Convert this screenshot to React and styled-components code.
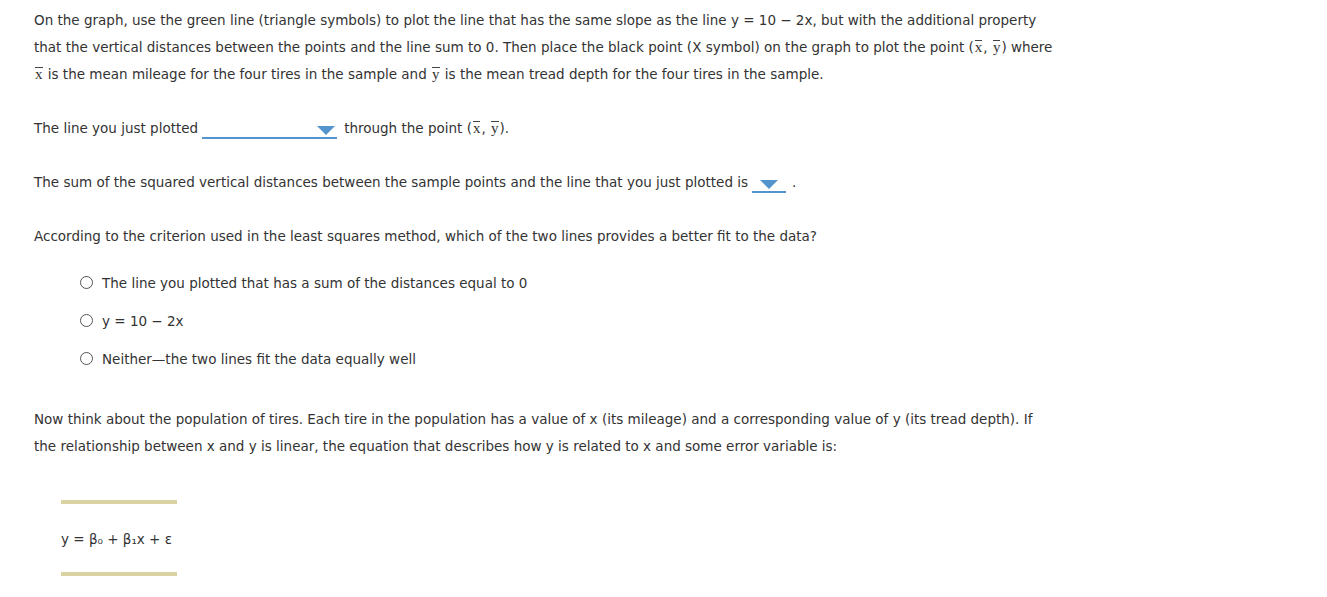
import styled, { createGlobalStyle } from "styled-components";

const GlobalStyle = createGlobalStyle`
    body {
        margin: 0;
        background: #fff;
        font-family: "DejaVu Sans", Verdana, sans-serif;
        font-size: 13.5px;
        color: #333;
    }
`;

const Page = styled.div`
    padding: 6.5px 0 0 34px;
`;

const Para = styled.p`
    margin: 0 0 ${props => (props.gap === undefined ? 27 : props.gap)}px;
    line-height: 27px;
    white-space: nowrap;
`;

// x̄ / ȳ: serif letter with a bar over it
const Bar = styled.span`
    display: inline-block;
    font-family: "Liberation Serif", "DejaVu Serif", serif;
    font-size: 15px;
    line-height: 9px;
    border-top: 1px solid #444;
    padding-top: 2px;
    margin: 0 1px;
`;

const Select = styled.span`
    display: inline-flex;
    justify-content: flex-end;
    align-items: flex-start;
    width: ${props => props.width}px;
    height: 13px;
    margin: 0 ${props => props.right || 7}px 0 4px;
    vertical-align: -2px;
    border-bottom: 2px solid #5494cc;
    padding-right: ${props => props.pad || 2}px;
    box-sizing: border-box;
`;

const Caret = styled.span`
    width: 0;
    height: 0;
    border-left: 9px solid transparent;
    border-right: 9px solid transparent;
    border-top: 9px solid #5494cc;
`;

const Options = styled.div`
    padding: 23px 0 0 46px;
    display: flex;
    flex-direction: column;
    gap: 18px;
    margin-bottom: 37px;
`;

const Option = styled.label`
    display: flex;
    align-items: center;
    gap: 9px;
    line-height: 20px;
`;

const Radio = styled.span`
    width: 11px;
    height: 11px;
    border: 1px solid #555;
    border-radius: 50%;
    flex: none;
`;

const Formula = styled.div`
    margin: 40px 0 0 27px;
    width: 116px;
    border-top: 4px solid #dbd2a3;
    border-bottom: 4px solid #dbd2a3;
    padding: 25px 0 23px;
    line-height: 20px;
`;

export default function App() {
    return (
        <Page>
            <GlobalStyle />
            <Para>
                On the graph, use the green line (triangle symbols) to plot the line that has the same
                slope as the line y = 10 &minus; 2x, but with the additional property
                <br />
                that the vertical distances between the points and the line sum to 0. Then place the
                black point (X symbol) on the graph to plot the point (<Bar>x</Bar>, <Bar>y</Bar>) where
                <br />
                <Bar>x</Bar> is the mean mileage for the four tires in the sample and <Bar>y</Bar> is the
                mean tread depth for the four tires in the sample.
            </Para>
            <Para>
                The line you just plotted
                <Select width={135}>
                    <Caret />
                </Select>
                through the point (<Bar>x</Bar>, <Bar>y</Bar>).
            </Para>
            <Para>
                The sum of the squared vertical distances between the sample points and the line that
                you just plotted is
                <Select width={34} pad={8} right={6}>
                    <Caret />
                </Select>
                .
            </Para>
            <Para gap={0}>
                According to the criterion used in the least squares method, which of the two lines
                provides a better fit to the data?
            </Para>
            <Options>
                <Option>
                    <Radio />
                    The line you plotted that has a sum of the distances equal to 0
                </Option>
                <Option>
                    <Radio />y = 10 &minus; 2x
                </Option>
                <Option>
                    <Radio />
                    Neither&mdash;the two lines fit the data equally well
                </Option>
            </Options>
            <Para gap={0}>
                Now think about the population of tires. Each tire in the population has a value of x
                (its mileage) and a corresponding value of y (its tread depth). If
                <br />
                the relationship between x and y is linear, the equation that describes how y is related
                to x and some error variable is:
            </Para>
            <Formula>y = β₀ + β₁x + ε</Formula>
        </Page>
    );
}
